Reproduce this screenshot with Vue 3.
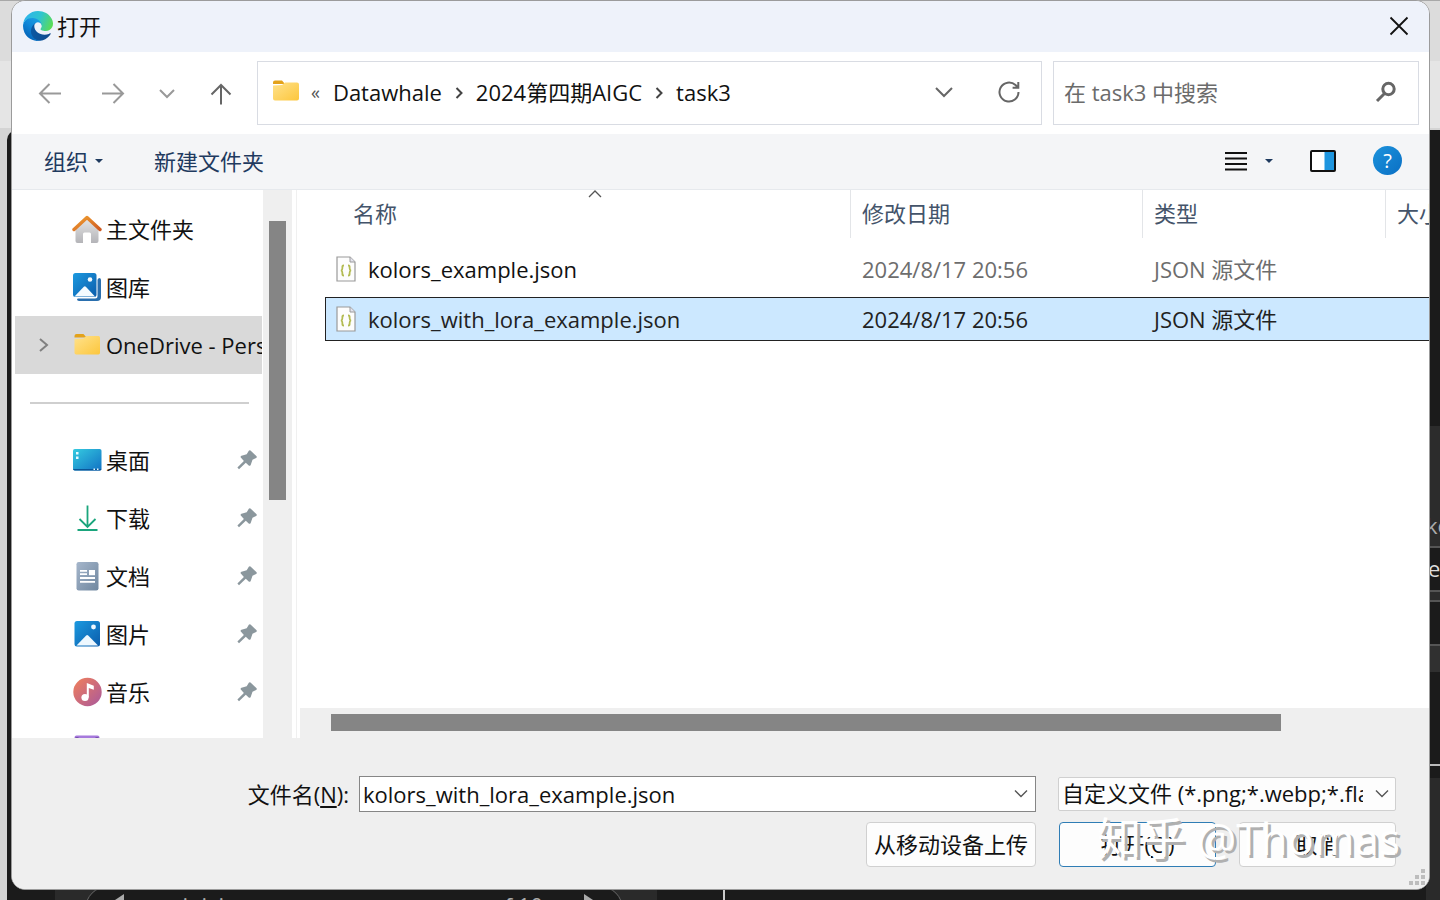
<template>
  <div class="desktop">
    <!-- windows that sit behind the dialog -->
    <div class="backdrop" aria-hidden="true">
      <div class="back-top"></div>
      <div class="back-window">
        <div class="peek">
          <div class="peek-panel"></div>
          <div class="peek-text">ko</div>
          <div class="peek-field">e</div>
          <div class="peek-gap"></div>
          <div class="peek-line"></div>
          <div class="peek-block"></div>
          <div class="peek-dark"></div>
          <div class="peek-bottom"></div>
        </div>
        <div class="pager-bar">
          <div class="pager">
            <svg width="14" height="18" viewBox="0 0 14 18"><path d="M13 1v16L1 9z" fill="#aaa" /></svg>
            <span class="pager-name">pipixia</span>
            <span class="pager-count">of 10</span>
            <svg width="14" height="18" viewBox="0 0 14 18"><path d="M1 1v16l12-8z" fill="#aaa" /></svg>
          </div>
        </div>
        <div class="caret"></div>
      </div>
    </div>

    <div class="dialog" role="dialog" aria-label="打开">
      <header class="titlebar">
        <svg class="logo" viewBox="0 0 256 256">
          <defs>
            <linearGradient id="edge-a" x1="60" y1="178" x2="237" y2="178" gradientUnits="userSpaceOnUse">
              <stop offset="0" stop-color="#0c59a4" />
              <stop offset="1" stop-color="#114a8b" />
            </linearGradient>
            <linearGradient id="edge-b" x1="150" y1="90" x2="45" y2="220" gradientUnits="userSpaceOnUse">
              <stop offset="0" stop-color="#1b9de2" />
              <stop offset="0.5" stop-color="#1187d8" />
              <stop offset="1" stop-color="#0669bd" />
            </linearGradient>
            <linearGradient id="edge-c" x1="20" y1="50" x2="240" y2="140" gradientUnits="userSpaceOnUse">
              <stop offset="0" stop-color="#2fb5e9" />
              <stop offset="0.5" stop-color="#2fc5cf" />
              <stop offset="1" stop-color="#5bdc55" />
            </linearGradient>
          </defs>
          <path fill="url(#edge-a)" d="M231.1 190.5a93.6 93.6 0 0 1-10.5 4.7 101.9 101.9 0 0 1-35.9 6.5c-47.3 0-88.5-32.5-88.5-74.3.1-11.4 6.4-21.9 16.4-27.3-42.8 1.8-53.8 46.4-53.8 72.5 0 73.9 68.1 81.4 82.8 81.4 7.9 0 19.8-2.3 27-4.6l1.3-.4a128.3 128.3 0 0 0 66.6-52.8 4 4 0 0 0-5.4-5.7z" />
          <path fill="url(#edge-b)" d="M105.7 241.4a79.2 79.2 0 0 1-22.7-21.3 80.7 80.7 0 0 1 29.5-120c3.2-1.5 8.5-4.1 15.6-4a32.4 32.4 0 0 1 25.7 13 31.9 31.9 0 0 1 6.3 18.7c0-.2 24.5-79.6-80-79.6-43.9 0-80 41.6-80 78.2a130.2 130.2 0 0 0 12.1 56 128 128 0 0 0 156.4 67.1 75.5 75.5 0 0 1-62.8-8z" />
          <path fill="url(#edge-c)" d="M152.3 148.9c-.8 1-3.3 2.5-3.3 5.7 0 2.6 1.7 5.1 4.7 7.2 14.4 10 41.5 8.7 41.6 8.7a59.6 59.6 0 0 0 30.3-8.3 61.4 61.4 0 0 0 30.4-52.9c.3-22.4-8-37.3-11.3-43.9C223.5 23.9 177.7 0 128 0A128 128 0 0 0 0 126.2c.5-36.5 36.8-66 80-66 3.5 0 23.5.3 42 10 16.3 8.6 24.9 18.9 30.8 29.2 6.2 10.7 7.3 24.1 7.3 29.5s-2.7 13.3-7.8 19.9z" />
        </svg>
        <span class="title">打开</span>
        <button class="close" aria-label="关闭">
          <svg width="20" height="20" viewBox="0 0 20 20"><path d="M1.5 1.5l17 17M18.5 1.5l-17 17" stroke="#111" stroke-width="1.8" /></svg>
        </button>
      </header>

      <nav class="navbar">
        <button class="nav-btn" aria-label="后退">
          <svg width="24" height="24" viewBox="0 0 24 24"><path d="M23 12.500H2M11.500 3L2 12.500l9.500 9.500" /></svg>
        </button>
        <button class="nav-btn" aria-label="前进">
          <svg width="24" height="24" viewBox="0 0 24 24"><path d="M1 12.500h21M12.500 3L22 12.500 12.500 22" /></svg>
        </button>
        <button class="nav-btn" aria-label="最近浏览的位置">
          <svg width="24" height="24" viewBox="0 0 24 24"><path d="M5 9l7 7 7-7" /></svg>
        </button>
        <button class="nav-btn up" aria-label="上移">
          <svg width="24" height="24" viewBox="0 0 24 24"><path d="M12 23.500V4M2.500 13.500L12 4l9.500 9.500" /></svg>
        </button>
        <div class="address">
          <svg class="folder" width="28" height="24" viewBox="0 0 28 24">
            <path d="M1 2.500a2 2 0 0 1 2-2h7l3 3.500H1z" fill="#e3a21a" />
            <path d="M1 5.500L10 5l3-2.500h12a2 2 0 0 1 2 2V18.500a2 2 0 0 1-2 2H3a2 2 0 0 1-2-2z" fill="url(#folder-fill)" />
          </svg>
          <span class="laquo">«</span>
          <template v-for="(crumb, i) in crumbs" :key="crumb">
            <svg v-if="i" class="crumb-sep" width="12" height="16" viewBox="0 0 12 16"><path d="M3.500 4l5 5-5 5" /></svg>
            <a href="#" class="crumb">{{ crumb }}</a>
          </template>
          <button class="addr-btn history" aria-label="以前的位置">
            <svg width="20" height="20" viewBox="0 0 20 20"><path d="M2 6l8 8 8-8" /></svg>
          </button>
          <button class="addr-btn" aria-label="刷新">
            <svg width="24" height="24" viewBox="0 0 24 24"><path d="M21.500 12a9.500 9.500 0 1 1-3-6.900L21 7.500M21.300 2v5.700h-5.700" /></svg>
          </button>
        </div>
        <div class="search">
          <input type="text" aria-label="搜索" placeholder="在 task3 中搜索" />
          <svg width="22" height="22" viewBox="0 0 22 22"><circle cx="13.500" cy="8" r="5.700" /><path d="M9.500 12.500L2 20" /></svg>
        </div>
      </nav>

      <div class="toolbar">
        <button class="tool">组织<span class="arrow"></span></button>
        <button class="tool new-folder">新建文件夹</button>
        <button class="tool view" aria-label="更改视图">
          <svg width="22" height="20" viewBox="0 0 22 20"><path d="M0 2h22M0 7.500h22M0 13h22M0 18.500h22" stroke="#111" stroke-width="1.800" /></svg>
          <span class="arrow"></span>
        </button>
        <button class="tool pane" aria-label="预览窗格">
          <svg width="26" height="22" viewBox="0 0 26 22">
            <rect x="1" y="1" width="24" height="20" rx="1" fill="#fff" />
            <rect x="14.500" y="1" width="10.500" height="20" fill="#1f96df" />
            <rect x="1" y="1" width="24" height="20" rx="1" fill="none" stroke="#111" stroke-width="2" />
          </svg>
        </button>
        <button class="help" aria-label="帮助">?</button>
      </div>

      <div class="content">
        <aside class="sidebar">
          <template v-for="item in places" :key="item.name">
            <hr v-if="item.line" />
            <a v-else href="#" class="place" :class="{ active: item.active }">
              <span class="expander">
                <svg v-if="item.active" width="12" height="16" viewBox="0 0 12 16"><path d="M2 2l7 6-7 6" /></svg>
              </span>
              <svg class="place-icon" width="30" height="30" viewBox="0 0 30 30">
                <g v-if="item.icon === 'home'">
                  <path d="M3.500 14L15 4l11.500 10v13a2 2 0 0 1-2 2H19v-9a1.500 1.500 0 0 0-1.500-1.500h-5A1.500 1.500 0 0 0 11 20v9H5.500a2 2 0 0 1-2-2z" fill="url(#home-fill)" />
                  <path d="M2 15.500L15 3.500l13 12" fill="none" stroke="url(#roof)" stroke-width="3.400" stroke-linecap="round" stroke-linejoin="round" />
                </g>
                <g v-else-if="item.icon === 'gallery'">
                  <path d="M27 6a2 2 0 0 1 2 2v17a4 4 0 0 1-4 4H7a2 2 0 0 1-2-2z" fill="#2a6fae" />
                  <rect x="0.500" y="0.500" width="25" height="26" rx="2.500" fill="#fff" />
                  <rect x="1" y="1" width="23.500" height="24" rx="2.500" fill="url(#pic-fill)" />
                  <path d="M2.500 24.500l9.300-9.800a1.500 1.500 0 0 1 2 0l9.200 9.800z" fill="#f4fbff" />
                  <circle cx="18" cy="7.500" r="2.300" fill="#f4fbff" />
                </g>
                <g v-else-if="item.icon === 'folder'">
                  <path d="M2.500 6a2 2 0 0 1 2-2h7l3 3.500h-12z" fill="#e3a21a" />
                  <path d="M2.500 9l9-.5 3-2.500h12a1.800 1.800 0 0 1 1.500 1.800v15A1.800 1.800 0 0 1 26.500 24.500H4.300a1.800 1.800 0 0 1-1.800-1.800z" fill="url(#folder-fill)" />
                </g>
                <g v-else-if="item.icon === 'desktop'">
                  <rect x="1" y="4" width="28.500" height="21.500" rx="1.800" fill="url(#desk-fill)" />
                  <path d="M1 24h28.500a1.800 1.800 0 0 1-1.800 1.500h-25A1.800 1.800 0 0 1 1 24z" fill="#0b5597" />
                  <path d="M4 7h2.500v2.500H4zM4 11.500h2.500V14H4zM21.500 23.500h1.500v1.500h-1.500zM25 23.500h1.500v1.500H25z" fill="#e8fbff" />
                </g>
                <g v-else-if="item.icon === 'download'" fill="none" stroke="#1aa57c" stroke-width="1.800">
                  <path d="M15.500 2.500v21M7.500 16l8 8 8-8M5.500 27h20" />
                </g>
                <g v-else-if="item.icon === 'document'">
                  <rect x="4.500" y="1" width="22" height="28.500" rx="2.200" fill="url(#doc-fill)" />
                  <path d="M8 9.800h7M8 13.200h7M8 17h15M8 20.800h15" stroke="#fff" stroke-width="1.800" />
                  <rect x="17" y="9" width="6" height="5.200" fill="#fff" />
                </g>
                <g v-else-if="item.icon === 'picture'">
                  <rect x="2.500" y="2" width="25.500" height="25.500" rx="2.500" fill="url(#pic-fill)" />
                  <path d="M4.500 26.500l9.700-10a1.500 1.500 0 0 1 2 0l9.800 10z" fill="#eef8ff" />
                  <circle cx="21.500" cy="8" r="2.400" fill="#eef8ff" />
                </g>
                <g v-else-if="item.icon === 'music'">
                  <circle cx="15.500" cy="15" r="14.200" fill="url(#music-fill)" />
                  <circle cx="13" cy="20.500" r="3.600" fill="#fff" />
                  <path d="M14.800 20.500V6l7 2.700v4l-5-1.700v9.500z" fill="#fff" />
                </g>
                <g v-else>
                  <rect x="2.500" y="0.500" width="25" height="28" rx="2" fill="#a679dc" />
                  <path d="M3.500 2.500h3v2h-3zM23.500 2.500h3v2h-3z" fill="#4a2a7c" />
                </g>
              </svg>
              <span class="place-name">{{ item.name }}</span>
              <svg v-if="item.pinned" class="pin" width="20" height="20" viewBox="0 0 20 20">
                <path d="M11.800.8a1.200 1.200 0 0 1 1.700-.2l5.800 5.400a1.200 1.200 0 0 1-.2 1.900l-3.600 1.900-1.800 5.200a1.200 1.200 0 0 1-2 .5L8.800 12.800 2 19.200.4 17.600 6.900 10.900 4 7.700a1.200 1.200 0 0 1 .5-2l5.200-1.400z" fill="#8b979d" />
              </svg>
            </a>
          </template>
        </aside>
        <div class="vscroll"><div class="vthumb"></div></div>

        <main class="files">
          <div class="list">
            <table>
              <colgroup>
                <col />
                <col class="col-date" />
                <col class="col-type" />
                <col class="col-size" />
              </colgroup>
              <thead>
                <tr>
                  <th class="name-head">
                    名称
                    <svg class="sort" width="14" height="8" viewBox="0 0 14 8"><path d="M1 7l6-6 6 6" fill="none" stroke="#555" stroke-width="1.300" /></svg>
                  </th>
                  <th>修改日期</th>
                  <th>类型</th>
                  <th>大小</th>
                </tr>
              </thead>
              <tbody>
                <tr v-for="file in files" :key="file.name" :class="{ selected: file.name === fileName }">
                  <td class="name">
                    <div class="file">
                      <svg width="20" height="26" viewBox="0 0 20 26">
                        <path d="M1 1h13l5 5v19H1z" fill="#fdfdfd" stroke="#9a9a9a" stroke-width="1.200" />
                        <path d="M14 1v5h5" fill="#e4e4ee" stroke="#9a9a9a" />
                        <path d="M8 9.500c-2 0-1.600 1-1.600 2.500 0 1.300-.2 2.200-1.400 2.500 1.200.3 1.400 1.200 1.400 2.500 0 1.500-.4 2.500 1.600 2.500M12 9.500c2 0 1.600 1 1.600 2.500 0 1.300.2 2.200 1.400 2.500-1.200.3-1.400 1.200-1.400 2.500 0 1.500.4 2.500-1.600 2.500" fill="none" stroke="#b3bb52" stroke-width="1.800" />
                      </svg>
                      {{ file.name }}
                    </div>
                  </td>
                  <td>{{ file.date }}</td>
                  <td>{{ file.type }}</td>
                  <td></td>
                </tr>
              </tbody>
            </table>
          </div>
          <div class="hscroll"><div class="hthumb"></div></div>
        </main>
      </div>

      <footer class="footer">
        <div class="row">
          <label for="file-name">文件名(<u>N</u>):</label>
          <div class="combo">
            <input id="file-name" v-model="fileName" type="text" />
            <svg width="14" height="10" viewBox="0 0 14 10"><path d="M1 1.500l6 6 6-6" /></svg>
          </div>
          <div class="filter">
            <select aria-label="文件类型">
              <option>自定义文件 (*.png;*.webp;*.flac)</option>
            </select>
            <svg width="14" height="10" viewBox="0 0 14 10"><path d="M1 1.500l6 6 6-6" /></svg>
          </div>
        </div>
        <div class="row actions">
          <button class="btn upload">从移动设备上传</button>
          <button class="btn primary">打开(<u>O</u>)</button>
          <button class="btn">取消</button>
        </div>
        <svg class="grip" width="16" height="16" viewBox="0 0 16 16">
          <path d="M12 0h4v4h-4zM6 6h4v4H6zM12 6h4v4h-4zM0 12h4v4H0zM6 12h4v4H6zM12 12h4v4h-4z" fill="#bdbdbd" />
        </svg>
      </footer>
    </div>

    <div class="watermark">知乎 @Thomas</div>

    <!-- shared gradients -->
    <svg class="defs" width="0" height="0">
      <defs>
        <linearGradient id="folder-fill" x1="0" y1="0" x2="1" y2="1">
          <stop offset="0" stop-color="#ffe28c" />
          <stop offset="1" stop-color="#fcc63c" />
        </linearGradient>
        <linearGradient id="home-fill" x1="0" y1="0" x2="0" y2="1">
          <stop offset="0" stop-color="#e6e6e6" />
          <stop offset="1" stop-color="#b4b4b8" />
        </linearGradient>
        <linearGradient id="roof" x1="0" y1="0" x2="1" y2="1">
          <stop offset="0" stop-color="#f0a030" />
          <stop offset="1" stop-color="#cf5a22" />
        </linearGradient>
        <linearGradient id="pic-fill" x1="0" y1="0" x2="1" y2="1">
          <stop offset="0" stop-color="#1c9ae0" />
          <stop offset="1" stop-color="#0b5cab" />
        </linearGradient>
        <linearGradient id="desk-fill" x1="0" y1="0" x2="1" y2="1">
          <stop offset="0" stop-color="#35cbe0" />
          <stop offset="1" stop-color="#1272c4" />
        </linearGradient>
        <linearGradient id="doc-fill" x1="0" y1="0" x2="1" y2="1">
          <stop offset="0" stop-color="#a5b6cb" />
          <stop offset="1" stop-color="#70879f" />
        </linearGradient>
        <linearGradient id="music-fill" x1="0" y1="0" x2="1" y2="1">
          <stop offset="0" stop-color="#f2805a" />
          <stop offset="1" stop-color="#a9589c" />
        </linearGradient>
      </defs>
    </svg>
  </div>
</template>

<script setup>
import { ref } from 'vue';

const crumbs = ['Datawhale', '2024第四期AIGC', 'task3'];

const places = [
  { name: '主文件夹', icon: 'home' },
  { name: '图库', icon: 'gallery' },
  { name: 'OneDrive - Personal', icon: 'folder', active: true },
  { name: 'line', line: true },
  { name: '桌面', icon: 'desktop', pinned: true },
  { name: '下载', icon: 'download', pinned: true },
  { name: '文档', icon: 'document', pinned: true },
  { name: '图片', icon: 'picture', pinned: true },
  { name: '音乐', icon: 'music', pinned: true },
  { name: '视频', icon: 'video', pinned: true },
];

const files = [
  { name: 'kolors_example.json', date: '2024/8/17 20:56', type: 'JSON 源文件' },
  { name: 'kolors_with_lora_example.json', date: '2024/8/17 20:56', type: 'JSON 源文件' },
];

const fileName = ref('kolors_with_lora_example.json');
</script>

<style>
body {
  margin: 0;
}
</style>

<style scoped>
* {
  box-sizing: border-box;
}

.desktop {
  position: relative;
  display: flex;
  flex-direction: column;
  height: 100vh;
  padding: 0 10px 10px 11px;
  overflow: hidden;
  font-family: "Open Sans", "Noto Sans CJK SC", sans-serif;
  font-size: 22px;
  line-height: 30px;
  color: #111;
}

button,
input,
select {
  font: inherit;
  color: inherit;
}

button {
  display: flex;
  align-items: center;
  justify-content: center;
  padding: 0;
  border: none;
  background: none;
}

a {
  color: inherit;
  text-decoration: none;
}

svg {
  flex: none;
}

/* backdrop */
.backdrop {
  position: absolute;
  inset: 0;
  background: #d4d4d4;
}

.back-top {
  height: 128px;
  border-top: 1px solid #a8a8a8;
  background: linear-gradient(#dcdcdc 60px, #e5e5e5 60px);
}

.back-window {
  position: absolute;
  top: 130px;
  right: 0;
  bottom: 0;
  left: 7px;
  border-radius: 10px 0 0 0;
  background: #1b1b1b;
  color: #aaa;
  overflow: hidden;
}

.peek {
  position: absolute;
  top: 296px;
  right: 0;
  bottom: 0;
  width: 14px;
  display: flex;
  flex-direction: column;
}

.peek-panel {
  height: 84px;
  background: #2c2c2c;
}

.peek-text {
  height: 38px;
  border-bottom: 2px solid #555;
  background: #2c2c2c;
}

.peek-field {
  height: 44px;
  padding: 5px 0 0 2px;
  border-bottom: 2px solid #555;
  color: #ddd;
}

.peek-gap {
  height: 10px;
  border-bottom: 2px solid #555;
  background: #2c2c2c;
}

.peek-line {
  height: 44px;
  border-bottom: 2px solid #555;
}

.peek-block {
  height: 26px;
  background: #303030;
}

.peek-dark {
  height: 94px;
  border-bottom: 2px solid #bbb;
}

.peek-bottom {
  flex: 1;
  margin-top: 12px;
  background: #2a2a2a;
}

.pager-bar {
  position: absolute;
  bottom: 0;
  left: 48px;
  width: 602px;
  height: 14px;
  padding: 0 34px 0 30px;
  background: #2a2a2a;
}

.pager {
  display: flex;
  align-items: flex-start;
  height: 46px;
  padding: 6px 25px 0;
  border: 1px solid #666;
  border-radius: 23px;
  background: #1b1b1b;
}

.pager-name,
.pager-count {
  line-height: 24px;
}

.pager-name {
  margin-left: 44px;
}

.pager-count {
  margin-left: auto;
  margin-right: 40px;
}

.caret {
  position: absolute;
  bottom: 0;
  left: 716px;
  width: 2px;
  height: 12px;
  background: #ccc;
}

/* dialog */
.dialog {
  position: relative;
  flex: 1;
  display: flex;
  flex-direction: column;
  min-height: 0;
  border: 1px solid #9b9b9b;
  border-radius: 14px;
  background: #fff;
  overflow: hidden;
}

.titlebar {
  display: flex;
  align-items: center;
  height: 51px;
  padding: 0 19px 2px 11px;
  background: #eef2fa;
}

.logo {
  width: 30px;
  height: 30px;
}

.title {
  margin-left: 4px;
}

.close {
  margin-left: auto;
  width: 22px;
  height: 30px;
}

.navbar {
  display: flex;
  align-items: center;
  height: 82px;
  padding: 0 10px 0 2px;
}

.nav-btn {
  width: 54px;
  height: 40px;
  fill: none;
  stroke: #999;
  stroke-width: 2;
}

.nav-btn:first-child {
  width: 72px;
}

.nav-btn.up {
  stroke: #666;
}

.address {
  flex: 1;
  display: flex;
  align-items: center;
  height: 64px;
  margin: 0 11px 0 9px;
  padding: 0 20px 2px 14px;
  border: 1px solid #d9dce3;
}

.laquo {
  margin: 0 13px 0 11px;
  font-size: 18px;
  color: #555;
}

.crumb-sep {
  margin: 0 11px;
  fill: none;
  stroke: #444;
  stroke-width: 2;
}

.addr-btn {
  width: 24px;
  height: 30px;
  fill: none;
  stroke: #666;
  stroke-width: 2;
}

.history {
  margin-left: auto;
  margin-right: 41px;
}

.search {
  display: flex;
  align-items: center;
  width: 366px;
  height: 64px;
  padding: 0 21px 2px 10px;
  border: 1px solid #d9dce3;
  fill: none;
  stroke: #666;
  stroke-width: 3;
}

.search input {
  flex: 1;
  min-width: 0;
  padding: 0;
  border: none;
  outline: none;
}

.search input::placeholder {
  color: #6b6b6b;
  opacity: 1;
}

.toolbar {
  display: flex;
  align-items: center;
  height: 56px;
  padding: 0 27px 2px 32px;
  border-bottom: 1px solid #e6e9ed;
  background: #f4f5f7;
}

.tool {
  color: #1f3a5f;
}

.arrow {
  margin-left: 7px;
  border: 4px solid transparent;
  border-top-color: #1f3a5f;
  border-bottom: none;
}

.new-folder {
  margin-left: 51px;
}

.view {
  margin-left: auto;
}

.view .arrow {
  margin-left: 18px;
}

.pane {
  margin: 0 37px;
}

.help {
  width: 29px;
  height: 29px;
  border-radius: 50%;
  background: linear-gradient(135deg, #1c93dc, #0a6fc4);
  color: #fff;
  font-size: 20px;
}

.content {
  flex: 1;
  display: flex;
  min-height: 0;
}

/* sidebar */
.sidebar {
  width: 251px;
  padding: 10px 1px 0 3px;
  overflow: hidden;
}

.place {
  display: flex;
  align-items: center;
  height: 58px;
  padding-right: 5px;
}

.place.active {
  padding-right: 0;
  background: #d9d9d9;
}

.expander {
  flex: none;
  display: flex;
  justify-content: center;
  width: 57px;
  fill: none;
  stroke: #808080;
  stroke-width: 2;
}

.place-name {
  flex: 1;
  margin-left: 4px;
  overflow: hidden;
  white-space: nowrap;
}

hr {
  height: 2px;
  margin: 28px 13px 27px 15px;
  border: none;
  background: #cfcfcf;
}

.vscroll {
  width: 29px;
  padding: 31px 6px 0;
  background: #efefef;
}

.vthumb {
  height: 54%;
  background: #858585;
}

/* file list */
.files {
  flex: 1;
  display: flex;
  flex-direction: column;
  min-width: 0;
  margin-left: 4px;
  border-left: 1px solid #f0f0f0;
}

.list {
  flex: 1;
  padding-left: 28px;
  overflow: hidden;
}

table {
  width: calc(100% + 76px);
  table-layout: fixed;
  border-spacing: 0;
}

.col-date {
  width: 292px;
}

.col-type {
  width: 243px;
}

.col-size {
  width: 120px;
}

th {
  height: 48px;
  padding: 0 0 2px 11px;
  border-left: 1px solid #e3e5e8;
  font-weight: 400;
  text-align: left;
  color: #44546a;
}

.name-head {
  position: relative;
  padding-left: 28px;
  border-left: none;
}

.sort {
  position: absolute;
  top: 0;
  left: 50%;
}

tbody::before {
  content: "";
  display: block;
  height: 9px;
}

td {
  height: 50px;
  padding: 0 0 6px 12px;
  color: #6d6d6d;
  white-space: nowrap;
}

.name {
  padding-left: 11px;
  color: #111;
}

.file {
  display: flex;
  align-items: center;
  gap: 12px;
}

.selected td {
  height: 44px;
  padding-bottom: 0;
  border: solid #222;
  border-width: 1px 0;
  background: #cce8ff;
  color: #222;
}

.selected .name {
  padding-left: 10px;
  border-left-width: 1px;
}

.hscroll {
  height: 30px;
  margin-left: 3px;
  padding: 6px 18px 7px 31px;
  background: #efefef;
}

.hthumb {
  width: 88%;
  height: 17px;
  background: #858585;
}

/* footer */
.footer {
  position: relative;
  padding: 38px 33px 22px 0;
  background: #efefef;
}

.row {
  display: flex;
  align-items: center;
}

label {
  width: 337px;
  margin-right: 10px;
  text-align: right;
}

u {
  text-underline-offset: 3px;
}

.combo {
  flex: 1;
  display: flex;
  align-items: center;
  height: 36px;
  margin-right: 22px;
  padding: 0 7px 0 3px;
  border: 1px solid #868686;
  background: #fff;
}

.combo input {
  flex: 1;
  min-width: 0;
  padding: 0;
  border: none;
  outline: none;
}

.combo svg,
.filter svg {
  fill: none;
  stroke: #555;
  stroke-width: 1.4;
}

.filter {
  position: relative;
  width: 338px;
  height: 34px;
}

.filter select {
  width: 100%;
  height: 34px;
  padding: 0 32px 2px 3px;
  border: 1px solid #d0d0d0;
  border-radius: 2px;
  background: #fdfdfd;
  appearance: none;
}

.filter svg {
  position: absolute;
  top: 12px;
  right: 7px;
  pointer-events: none;
}

.actions {
  justify-content: flex-end;
  gap: 23px;
  margin-top: 10px;
}

.btn {
  width: 157px;
  height: 45px;
  padding-bottom: 2px;
  border: 1px solid #d0d0d0;
  border-radius: 4px;
  background: #fdfdfd;
}

.upload {
  width: 170px;
  white-space: nowrap;
}

.primary {
  border-color: #2f7db5;
}

.grip {
  position: absolute;
  right: 4px;
  bottom: 4px;
}

.watermark {
  position: absolute;
  right: 40px;
  bottom: 34px;
  font-size: 44px;
  line-height: 56px;
  color: #fff;
  text-shadow: 3px 3px 0 #b0b0b0;
  pointer-events: none;
}

.defs {
  position: absolute;
}
</style>
